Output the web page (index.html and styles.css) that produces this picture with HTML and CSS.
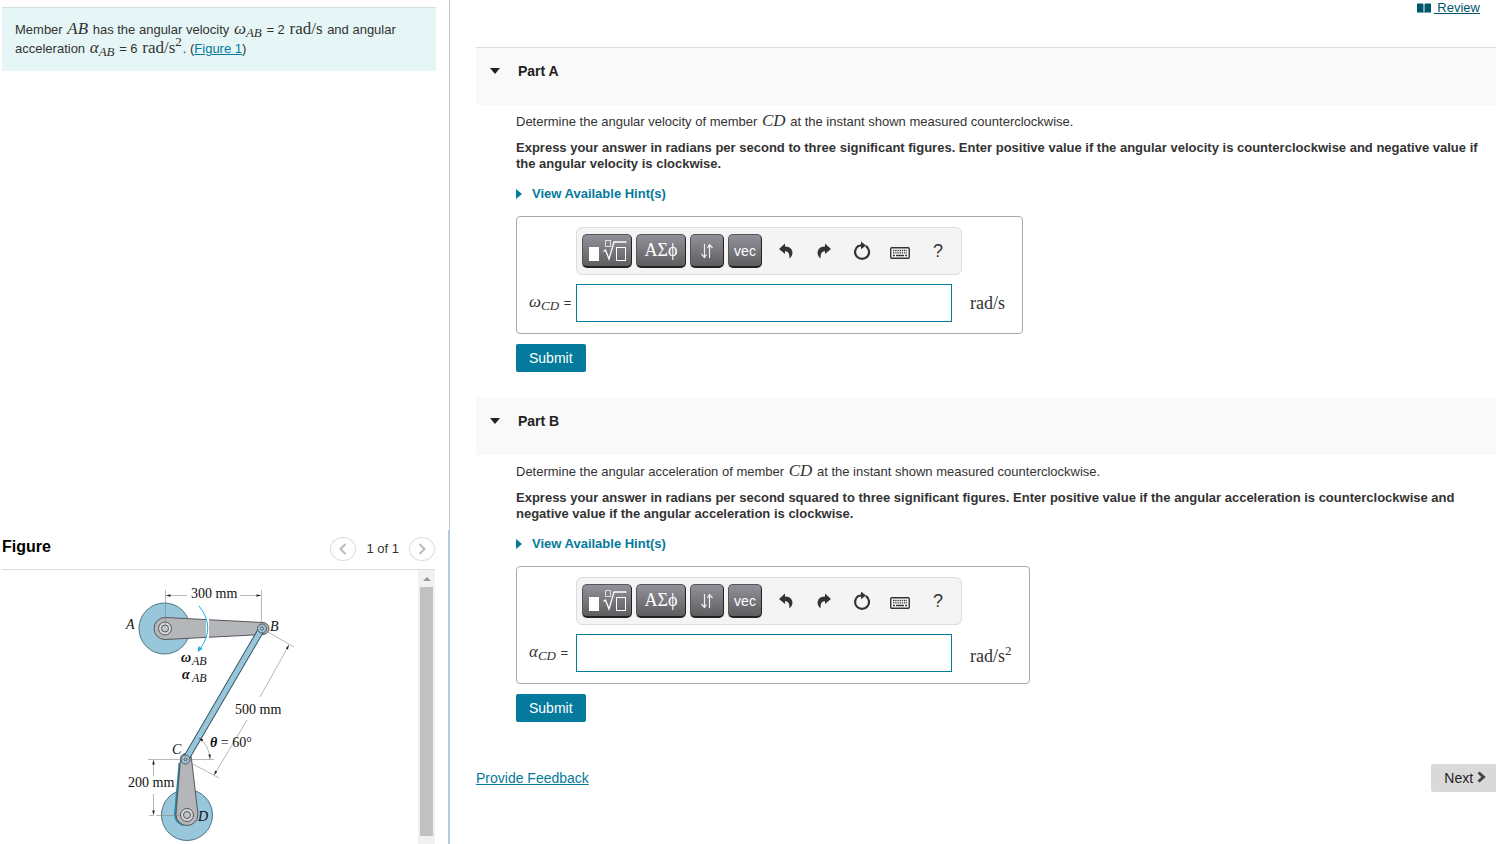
FILE: index.html
```
<!DOCTYPE html>
<html lang="en">
<head>
    <meta charset="UTF-8">
    <meta name="viewport" content="width=device-width, initial-scale=1.0">
    <title>Angular velocity and acceleration</title>
    <link rel="stylesheet" href="styles.css">
</head>
<body>
    <!-- shared icons -->
    <svg class="sprite" aria-hidden="true">
        <symbol id="icon-root" viewBox="0 0 40 24">
            <rect x="2" y="8" width="10" height="14" fill="#fff"/>
            <rect x="18.500" y="1.500" width="5" height="6" fill="none" stroke="#ddd"/>
            <path d="M16.500 12.500l2-1.500 3.500 9 5-17h12.500" fill="none" stroke="#fff" stroke-width="1.300"/>
            <rect x="29.500" y="8.500" width="9" height="13" fill="none" stroke="#fff"/>
        </symbol>
        <symbol id="icon-arrows" viewBox="0 0 16 18">
            <path d="M5.500 2v13M2.500 12l3 3.500 2-3M10.500 16V3M8.500 6l2-3.500 3 3.500" fill="none" stroke="#eee" stroke-width="1.200"/>
        </symbol>
        <symbol id="icon-undo" viewBox="0 0 16 16">
            <path d="M7 0.500L1 6l6 5V8.200c3.500 0 4.700 2.500 4.300 7.300 2.700-2 3.700-5 2.900-7.500C13.300 5 10.500 3.600 7 3.600z"/>
        </symbol>
        <symbol id="icon-redo" viewBox="0 0 16 16">
            <path d="M9 0.500L15 6l-6 5V8.200c-3.500 0-4.700 2.500-4.300 7.300-2.700-2-3.700-5-2.900-7.500C2.700 5 5.500 3.600 9 3.600z"/>
        </symbol>
        <symbol id="icon-reset" viewBox="0 0 18 20">
            <path d="M12.800 5A7 7 0 1 1 5.500 4.900" fill="none" stroke="#333" stroke-width="2.200"/>
            <path d="M8 0.500l5 4-5 3.800V5.500L4.500 6.200 4 4.400 8 3.300z"/>
        </symbol>
        <symbol id="icon-keyboard" viewBox="0 0 20 12">
            <rect x="0.750" y="0.750" width="18.500" height="10.500" rx="1" fill="#fff" stroke="#333" stroke-width="1.400"/>
            <path d="M3 3.500h14M3 5.800h14" stroke="#333" stroke-width="1.300" stroke-dasharray="1.400 0.800"/>
            <path d="M3 8.500h2M6 8.500h8M15 8.500h2" stroke="#333" stroke-width="1.300"/>
        </symbol>
        <symbol id="icon-book" viewBox="0 0 14 10">
            <path d="M0 0.500h5.500l1 0.500v9L5.500 9.500H0zM14 0.500H8.500l-1 0.500v9l1-0.500H14z" fill="#00566b"/>
        </symbol>
    </svg>

    <div class="page">
        <aside class="sidebar">
            <div class="problem">
                Member <span class="math"><i>AB</i></span> has the angular velocity <span class="math"><i>ω<sub>AB</sub></i></span> = 2 <span class="math">rad/s</span> and angular acceleration <span class="math"><i>α<sub>AB</sub></i></span> = 6 <span class="math">rad/s<sup>2</sup></span>. (<a href="#figure">Figure 1</a>)
            </div>

            <section class="figure-panel" id="figure">
                <div class="figure-header">
                    <h2>Figure</h2>
                    <div class="pager">
                        <button type="button" aria-label="Previous figure">
                            <svg viewBox="0 0 8 12" width="8" height="12"><path d="M6.500 1L1.500 6l5 5"/></svg>
                        </button>
                        <span>1 of 1</span>
                        <button type="button" aria-label="Next figure">
                            <svg viewBox="0 0 8 12" width="8" height="12"><path d="M1.500 1l5 5-5 5"/></svg>
                        </button>
                    </div>
                </div>
                <div class="figure-body">
                    <div class="drawing">
                        <svg viewBox="120 580 180 264" width="180" height="264" role="img" aria-label="Linkage ABCD">
                            <defs>
                                <marker id="tip" viewBox="0 0 6 4" markerWidth="5" markerHeight="3" refX="6" refY="2" orient="auto-start-reverse" markerUnits="userSpaceOnUse">
                                    <path d="M0 0.300L6 2 0 3.700z" fill="#222"/>
                                </marker>
                            </defs>
                            <!-- wheels -->
                            <g fill="#98c7dc" stroke="#4d7385">
                                <circle cx="164.500" cy="628.500" r="25.500"/>
                                <circle cx="187" cy="815" r="25.500"/>
                            </g>
                            <!-- arm AB -->
                            <path d="M165 617.500L263 622.500a6 6 0 0 1 0 12L165 639.500a11 11 0 0 1 0-22z" fill="#b5b6b9" stroke="#55565a"/>
                            <!-- arm CD -->
                            <path d="M179.500 763L175 815a12 12 0 0 0 8 10" fill="none" stroke="#2387a5" stroke-width="2"/>
                            <path d="M180.500 759a5.500 5.500 0 0 1 11 0L198 814.500a11 11 0 0 1-22 0z" fill="#b5b6b9" stroke="#55565a"/>
                            <!-- rod BC -->
                            <path d="M262 628.500L185.500 759.500" stroke="#3c5662" stroke-width="7"/>
                            <path d="M262 628.500L185.500 759.500" stroke="#98c7dc" stroke-width="5"/>
                            <!-- pins -->
                            <g fill="#d5d6d8" stroke="#55565a">
                                <circle cx="165" cy="628.500" r="6.500"/>
                                <circle cx="165" cy="628.500" r="3.500" fill="#c4c5c8"/>
                                <circle cx="187" cy="815" r="6.500"/>
                                <circle cx="187" cy="815" r="3.500" fill="#c4c5c8"/>
                                <circle cx="262" cy="628.500" r="4.500" fill="#98c7dc"/>
                                <circle cx="262" cy="628.500" r="1.500"/>
                                <circle cx="185.500" cy="759.500" r="4.500" fill="#98c7dc"/>
                                <circle cx="185.500" cy="759.500" r="1.500"/>
                            </g>
                            <!-- dimension lines -->
                            <g fill="none" stroke="#888" stroke-width="0.600">
                                <path d="M165.500 590v36M261.500 590v36M148 759.500h66M156 815.500h24M149 815.500h5M268 632l26 15M191 763l28 15"/>
                                <path d="M187 595.500h-21" marker-end="url(#tip)"/>
                                <path d="M240 595.500h21" marker-end="url(#tip)"/>
                                <path d="M260 697l29-52" marker-end="url(#tip)"/>
                                <path d="M247 720l-33 55" marker-end="url(#tip)"/>
                                <path d="M153.500 776v-16" marker-end="url(#tip)"/>
                                <path d="M153.500 794v21" marker-end="url(#tip)"/>
                                <path d="M199 738q10 7 11 21" marker-start="url(#tip)" marker-end="url(#tip)"/>
                            </g>
                            <path d="M207.500 619v19" stroke="#fff" stroke-width="3"/>
                            <path d="M199 606q17 21 1 43" fill="none" stroke="#1fa9e6"/>
                            <path d="M197.500 652l1-6 4 3z" fill="#1fa9e6"/>
                            <g class="dimension">
                                <text x="191" y="598">300 mm</text>
                                <text x="235" y="714">500 mm</text>
                                <text x="128" y="787">200 mm</text>
                                <text x="210" y="747"><tspan class="symbol">θ</tspan> = 60°</text>
                            </g>
                            <g class="point">
                                <text x="126" y="629">A</text>
                                <text x="270" y="631">B</text>
                                <text x="172" y="754">C</text>
                                <text x="198" y="821">D</text>
                                <text x="181" y="662" class="symbol">ω</text>
                                <text x="192" y="665" class="index">AB</text>
                                <text x="182" y="679" class="symbol">α</text>
                                <text x="192" y="682" class="index">AB</text>
                            </g>
                        </svg>
                    </div>
                    <div class="scrollbar">
                        <svg viewBox="0 0 8 4" width="8" height="4"><path d="M0 4l4-4 4 4z" fill="#999"/></svg>
                        <div class="thumb"></div>
                    </div>
                </div>
            </section>
        </aside>

        <main class="content">
            <div class="topbar">
                <a href="#review"><svg width="14" height="10"><use href="#icon-book"/></svg><span>&nbsp;Review</span></a>
            </div>

            <section class="part">
                <button type="button" class="part-header first"><span class="caret"></span>Part A</button>
                <div class="part-body">
                    <p>Determine the angular velocity of member <span class="math"><i>CD</i></span> at the instant shown measured counterclockwise.</p>
                    <p class="instruction">Express your answer in radians per second to three significant figures. Enter positive value if the angular velocity is counterclockwise and negative value if the angular velocity is clockwise.</p>
                    <a class="hint" href="#hint-a">View Available Hint(s)</a>
                    <form>
                        <div class="answer">
                            <div class="toolbar">
                                <button type="button" class="key wide" aria-label="Templates"><svg width="40" height="24"><use href="#icon-root"/></svg></button>
                                <button type="button" class="key wide greek">ΑΣϕ</button>
                                <button type="button" class="key" aria-label="Arrows"><svg width="16" height="18"><use href="#icon-arrows"/></svg></button>
                                <button type="button" class="key">vec</button>
                                <div class="tools">
                                    <button type="button" aria-label="Undo"><svg width="16" height="16"><use href="#icon-undo"/></svg></button>
                                    <button type="button" aria-label="Redo"><svg width="16" height="16"><use href="#icon-redo"/></svg></button>
                                    <button type="button" aria-label="Reset"><svg width="18" height="20"><use href="#icon-reset"/></svg></button>
                                    <button type="button" class="low" aria-label="Keyboard"><svg width="20" height="12"><use href="#icon-keyboard"/></svg></button>
                                    <button type="button">?</button>
                                </div>
                            </div>
                            <label for="answer-a"><span class="math"><i>ω<sub>CD</sub></i></span> =</label>
                            <input type="text" id="answer-a">
                            <span class="unit math">rad/s</span>
                        </div>
                        <button type="submit" class="submit">Submit</button>
                    </form>
                </div>
            </section>

            <section class="part">
                <button type="button" class="part-header"><span class="caret"></span>Part B</button>
                <div class="part-body">
                    <p>Determine the angular acceleration of member <span class="math"><i>CD</i></span> at the instant shown measured counterclockwise.</p>
                    <p class="instruction">Express your answer in radians per second squared to three significant figures. Enter positive value if the angular acceleration is counterclockwise and negative value if the angular acceleration is clockwise.</p>
                    <a class="hint" href="#hint-b">View Available Hint(s)</a>
                    <form>
                        <div class="answer">
                            <div class="toolbar">
                                <button type="button" class="key wide" aria-label="Templates"><svg width="40" height="24"><use href="#icon-root"/></svg></button>
                                <button type="button" class="key wide greek">ΑΣϕ</button>
                                <button type="button" class="key" aria-label="Arrows"><svg width="16" height="18"><use href="#icon-arrows"/></svg></button>
                                <button type="button" class="key">vec</button>
                                <div class="tools">
                                    <button type="button" aria-label="Undo"><svg width="16" height="16"><use href="#icon-undo"/></svg></button>
                                    <button type="button" aria-label="Redo"><svg width="16" height="16"><use href="#icon-redo"/></svg></button>
                                    <button type="button" aria-label="Reset"><svg width="18" height="20"><use href="#icon-reset"/></svg></button>
                                    <button type="button" class="low" aria-label="Keyboard"><svg width="20" height="12"><use href="#icon-keyboard"/></svg></button>
                                    <button type="button">?</button>
                                </div>
                            </div>
                            <label for="answer-b"><span class="math"><i>α<sub>CD</sub></i></span> =</label>
                            <input type="text" id="answer-b">
                            <span class="unit math">rad/s<sup>2</sup></span>
                        </div>
                        <button type="submit" class="submit">Submit</button>
                    </form>
                </div>
            </section>

            <footer>
                <a href="#feedback">Provide Feedback</a>
                <button type="button" class="next">Next <svg viewBox="0 0 9 12" width="9" height="12"><path d="M1.500 1.500L6.500 6l-5 4.500" fill="none" stroke="#444" stroke-width="3"/></svg></button>
            </footer>
        </main>
    </div>
</body>
</html>
```
FILE: styles.css
```
* {
    box-sizing: border-box;
}
body {
    margin: 0;
    font-family: "Liberation Sans", Arial, sans-serif;
    font-size: 13px;
    line-height: 16px;
    color: #333;
    background-color: #fff;
}
a {
    color: #047a9c;
}
button {
    font-family: inherit;
    cursor: pointer;
}
.sprite {
    display: none;
}
.page {
    display: grid;
    grid-template-columns: 450px 1fr;
    min-height: 100vh;
}
.math {
    margin: 0 1px;
    font-family: "Liberation Serif", "Times New Roman", serif;
    font-size: 17px;
    line-height: 0;
}
.math sub, .math sup {
    font-size: 13px;
    line-height: 0;
}
.math sub {
    vertical-align: -3px;
}

/* left column */
.sidebar {
    display: flex;
    flex-direction: column;
    justify-content: space-between;
    padding: 7px 0 0 2px;
    border-right: 1px solid #b8c9d9;
}
.problem {
    margin-right: 13px;
    padding: 12px 12px 13px 13px;
    border-top: 1px solid #d3e0e0;
    background-color: #e6f6f6;
    line-height: 19px;
}
.figure-panel {
    padding-right: 13px;
    border-right: 1px solid #b8c9d9;
}
.figure-header {
    display: flex;
    justify-content: space-between;
    align-items: center;
    height: 40px;
    border-bottom: 1px solid #ddd;
}
.figure-header h2 {
    margin: 0 0 6px;
    font-size: 16px;
    color: #000;
}
.pager {
    display: flex;
    align-items: center;
    gap: 10px;
    margin-bottom: 2px;
}
.pager button {
    display: grid;
    place-items: center;
    width: 26px;
    height: 24px;
    padding: 0;
    border: 1px solid #ddd;
    border-radius: 50%;
    background-color: #fff;
}
.pager path {
    fill: none;
    stroke: #bbb;
    stroke-width: 2;
}
.figure-body {
    display: flex;
    height: 274px;
}
.drawing {
    flex: 1;
    padding-top: 10px;
    text-align: center;
}
.drawing svg {
    display: block;
    margin: 0 auto;
}
.drawing text {
    font-family: "Liberation Serif", "Times New Roman", serif;
    font-size: 14px;
    fill: #111;
}
.drawing .point text, .drawing .symbol {
    font-style: italic;
}
.drawing .symbol {
    font-weight: bold;
}
.drawing .point .index {
    font-size: 12px;
}
.scrollbar {
    display: flex;
    flex-direction: column;
    align-items: center;
    gap: 6px;
    width: 17px;
    padding: 7px 0 8px;
    background-color: #f1f1f1;
}
.thumb {
    flex: 1;
    width: 13px;
    background-color: #c1c1c1;
}

/* right column */
.content {
    padding-left: 26px;
}
.topbar {
    height: 47px;
    padding-right: 16px;
    text-align: right;
}
.topbar a {
    display: inline-flex;
    align-items: center;
    gap: 3px;
    color: #00566b;
    text-decoration: none;
}
.topbar span {
    text-decoration: underline;
}
.part-header {
    display: flex;
    align-items: center;
    gap: 18px;
    width: 100%;
    height: 57px;
    padding: 0 14px 12px;
    border: 0;
    background-color: #f9f9f9;
    color: #222;
    font-size: 14px;
    font-weight: bold;
}
.part-header.first {
    height: 58px;
    border-top: 1px solid #ddd;
}
.caret {
    border: 5px solid transparent;
    border-top: 6px solid #222;
    border-bottom: 0;
}
.part-body {
    padding: 8px 12px 26px 40px;
}
.part-body p {
    margin: 0 0 9px;
    line-height: 18px;
}
.part-body .instruction {
    margin-bottom: 14px;
    font-weight: bold;
    line-height: 16px;
}
.hint {
    display: flex;
    align-items: center;
    gap: 10px;
    width: fit-content;
    margin-bottom: 14px;
    font-weight: bold;
    text-decoration: none;
}
.hint::before {
    content: "";
    border: 5px solid transparent;
    border-left: 6px solid #047a9c;
    border-right: 0;
}
.answer {
    display: grid;
    grid-template-columns: 48px 376px auto;
    align-items: center;
    row-gap: 9px;
    width: fit-content;
    margin-bottom: 10px;
    padding: 10px 16px 11px 11px;
    border: 1px solid #aaa;
    border-radius: 4px;
}
.toolbar {
    grid-column: 2 / 4;
    justify-self: start;
    display: flex;
    gap: 4px;
    height: 48px;
    padding: 6px 4px 6px 5px;
    border: 1px solid #ddd;
    border-radius: 6px;
    background-color: #f4f4f4;
}
.toolbar button {
    display: grid;
    place-items: center;
    padding: 0;
}
.key {
    width: 34px;
    height: 34px;
    border: 1px solid #555;
    border-right-color: #222;
    border-bottom: 2px solid #222;
    border-radius: 5px;
    background: linear-gradient(#91919a, #5e5e60);
    color: #fff;
    font-size: 14px;
}
.key.wide {
    width: 50px;
}
.key.greek {
    font-family: "Liberation Serif", "Times New Roman", serif;
    font-size: 18px;
}
.tools {
    display: flex;
    padding-left: 1px;
}
.tools button {
    width: 38px;
    height: 34px;
    border: 0;
    background: none;
    color: #333;
    fill: #333;
    font-size: 18px;
}
.tools .low {
    padding-top: 4px;
}
.answer label {
    white-space: nowrap;
}
.answer input {
    width: 100%;
    height: 38px;
    padding: 0 8px;
    border: 1px solid #047a9c;
    font-size: 16px;
}
.unit {
    padding-left: 17px;
    font-size: 18px;
}
.submit {
    height: 28px;
    padding: 0 13px;
    border: 0;
    border-radius: 2px;
    background-color: #047a9c;
    color: #fff;
    font-size: 14px;
}
form {
    display: flex;
    flex-direction: column;
    align-items: flex-start;
}
footer {
    display: flex;
    justify-content: space-between;
    align-items: center;
    padding-top: 16px;
    font-size: 14px;
}
.next {
    height: 28px;
    padding: 0 10px 0 13px;
    border: 0;
    border-radius: 2px 0 0 2px;
    background-color: #d9d9d9;
    color: #222;
    font-size: 14px;
}
```
